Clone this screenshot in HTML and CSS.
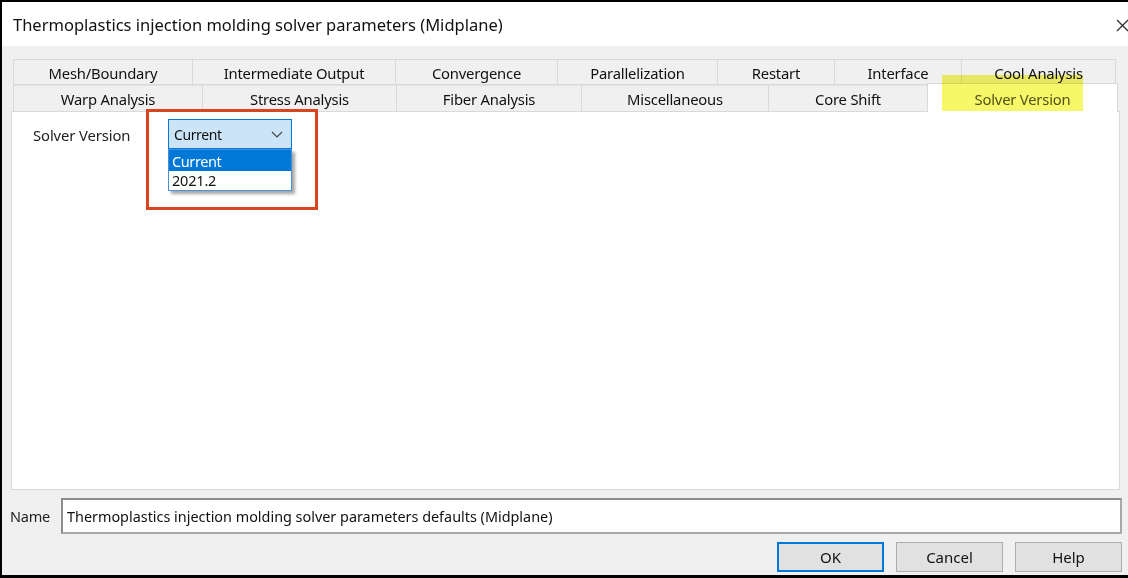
FILE: index.html
```html
<!DOCTYPE html>
<html lang="en">
<head>
    <meta charset="UTF-8">
    <title>Thermoplastics injection molding solver parameters (Midplane)</title>
    <link rel="stylesheet" href="styles.css">
</head>
<body>

    <div class="dialog">
        <!-- Title Bar -->
        <div class="titlebar">
            <span class="title">Thermoplastics injection molding solver parameters (Midplane)</span>
            <svg class="close" width="12" height="13" viewBox="0 0 12 13">
                <path d="M1 1 L12 12 M12 1 L1 12" stroke="#333" stroke-width="1.4" fill="none"/>
            </svg>
        </div>

        <div class="content">
            <!-- Tabs -->
            <div class="tabs">
                <div class="tab-row row-top">
                    <div class="tab">Mesh/Boundary</div>
                    <div class="tab">Intermediate Output</div>
                    <div class="tab">Convergence</div>
                    <div class="tab">Parallelization</div>
                    <div class="tab">Restart</div>
                    <div class="tab">Interface</div>
                    <div class="tab">Cool Analysis</div>
                </div>
                <div class="tab-row row-bottom">
                    <div class="tab">Warp Analysis</div>
                    <div class="tab">Stress Analysis</div>
                    <div class="tab">Fiber Analysis</div>
                    <div class="tab">Miscellaneous</div>
                    <div class="tab">Core Shift</div>
                    <div class="tab active">Solver Version</div>
                </div>
            </div>

            <!-- Tab Page -->
            <div class="panel">
                <div class="field">
                    <span class="field-label">Solver Version</span>
                    <div class="combo">
                        <div class="combo-box">
                            <span>Current</span>
                            <svg class="chevron" width="12" height="7" viewBox="0 0 12 7">
                                <path d="M1 1 L6 6 L11 1" stroke="#444" stroke-width="1.2" fill="none"/>
                            </svg>
                        </div>
                        <ul class="combo-list">
                            <li class="selected">Current</li>
                            <li>2021.2</li>
                        </ul>
                    </div>
                </div>
            </div>

            <!-- Name -->
            <div class="name-row">
                <span class="name-label">Name</span>
                <input class="name-input" type="text" value="Thermoplastics injection molding solver parameters defaults (Midplane)">
            </div>

            <!-- Buttons -->
            <div class="buttons">
                <button class="btn btn-default">OK</button>
                <button class="btn">Cancel</button>
                <button class="btn">Help</button>
            </div>
        </div>

        <!-- Annotations drawn over the screenshot -->
        <div class="mark-box"></div>
        <div class="mark-highlight"></div>
    </div>

</body>
</html>
```

FILE: styles.css
```css
* {
    box-sizing: border-box;
    margin: 0;
    padding: 0;
    font-family: 'Noto Sans', 'Open Sans', sans-serif;
}

body {
    background: #000;
    width: 1128px;
    height: 578px;
    overflow: hidden;
}

.dialog {
    position: relative;
    margin: 2px 0 0 2px;
    width: 1126px;
    height: 573px;
    background: #f0f0f0;
    overflow: hidden;
}

/* Title Bar */
.titlebar {
    height: 44px;
    background: #fff;
    display: flex;
    justify-content: space-between;
    align-items: center;
    padding-left: 11px;
}

.title {
    font-size: 16.5px;
    color: #111;
}

.close {
    margin-top: 2px;
}

/* Content */
.content {
    padding: 13px 0 0 9px;
}

.tabs {
    padding-left: 2px;
}

.tab-row {
    display: grid;
    height: 26px;
}

.row-top {
    grid-template-columns: 179px 203px 162px 160px 117px 127px 155px;
}

.row-bottom {
    grid-template-columns: 189px 194px 185px 187px 159px 191px;
}

.tab {
    background: #f0f0f0;
    border: 1px solid #d9d9d9;
    border-right: none;
    font-size: 14.8px;
    letter-spacing: -0.2px;
    color: #111;
    display: flex;
    align-items: center;
    justify-content: center;
    padding-top: 1px;
}

.tab:last-child {
    border-right: 1px solid #d9d9d9;
}

.row-bottom .tab {
    border-top-color: #e2e2e2;
}

.tab.active {
    background: #fff;
    border-color: #d9d9d9;
    border-bottom: none;
    margin-top: -2px;
    height: 29px;
    position: relative;
    z-index: 1;
    color: #55553a;
}

/* Tab page */
.panel {
    width: 1109px;
    height: 379px;
    background: #fff;
    border: 1px solid #d9d9d9;
    padding: 14px 0 0 21px;
}

.field {
    display: flex;
    align-items: flex-start;
}

.field-label {
    width: 135px;
    font-size: 14.8px;
    letter-spacing: -0.1px;
    color: #222;
    line-height: 16px;
    margin-top: 1px;
}

.combo {
    position: relative;
    margin-top: -7px;
}

.combo-box {
    width: 124px;
    height: 30px;
    border: 1px solid #0078d7;
    background: #cce4f7;
    display: flex;
    align-items: center;
    justify-content: space-between;
    padding: 0 8px 0 5px;
    font-size: 14px;
    letter-spacing: -0.4px;
    color: #111;
}

.combo-list {
    position: absolute;
    top: 30px;
    left: 0;
    width: 124px;
    list-style: none;
    background: #fff;
    border: 1px solid #4a90d9;
    box-shadow: 3px 3px 3px rgba(0, 0, 0, 0.35);
    font-size: 14.5px;
    letter-spacing: -0.2px;
    line-height: 19px;
}

.combo-list li {
    padding-left: 3px;
    color: #111;
}

.combo-list li.selected {
    background: #0078d7;
    color: #fff;
    height: 21px;
    line-height: 23px;
    letter-spacing: -0.4px;
}

/* Name row */
.name-row {
    display: flex;
    align-items: center;
    margin-top: 8px;
    margin-left: -1px;
}

.name-label {
    width: 51px;
    font-size: 14.5px;
    letter-spacing: -0.2px;
    color: #222;
}

.name-input {
    width: 1061px;
    height: 36px;
    border: 2px solid #a8a8a8;
    border-top-color: #8c8c8c;
    border-left-color: #8c8c8c;
    background: #fff;
    padding: 0 4px;
    font-size: 14.4px;
    color: #111;
    outline: none;
}

/* Buttons */
.buttons {
    display: flex;
    justify-content: flex-end;
    gap: 12px;
    margin-top: 8px;
    padding-right: 6px;
}

.btn {
    width: 107px;
    height: 30px;
    background: #e1e1e1;
    border: 1px solid #adadad;
    font-size: 15px;
    color: #111;
}

.btn-default {
    border: 2px solid #0078d7;
}

/* Annotation marks */
.mark-box {
    position: absolute;
    z-index: 2;
    left: 144px;
    top: 107px;
    width: 172px;
    height: 101px;
    border: 3px solid #d9451f;
}

.mark-highlight {
    position: absolute;
    z-index: 2;
    left: 940px;
    top: 73px;
    width: 141px;
    height: 36px;
    background: #f7f75a;
    mix-blend-mode: multiply;
    opacity: 0.9;
}
```
